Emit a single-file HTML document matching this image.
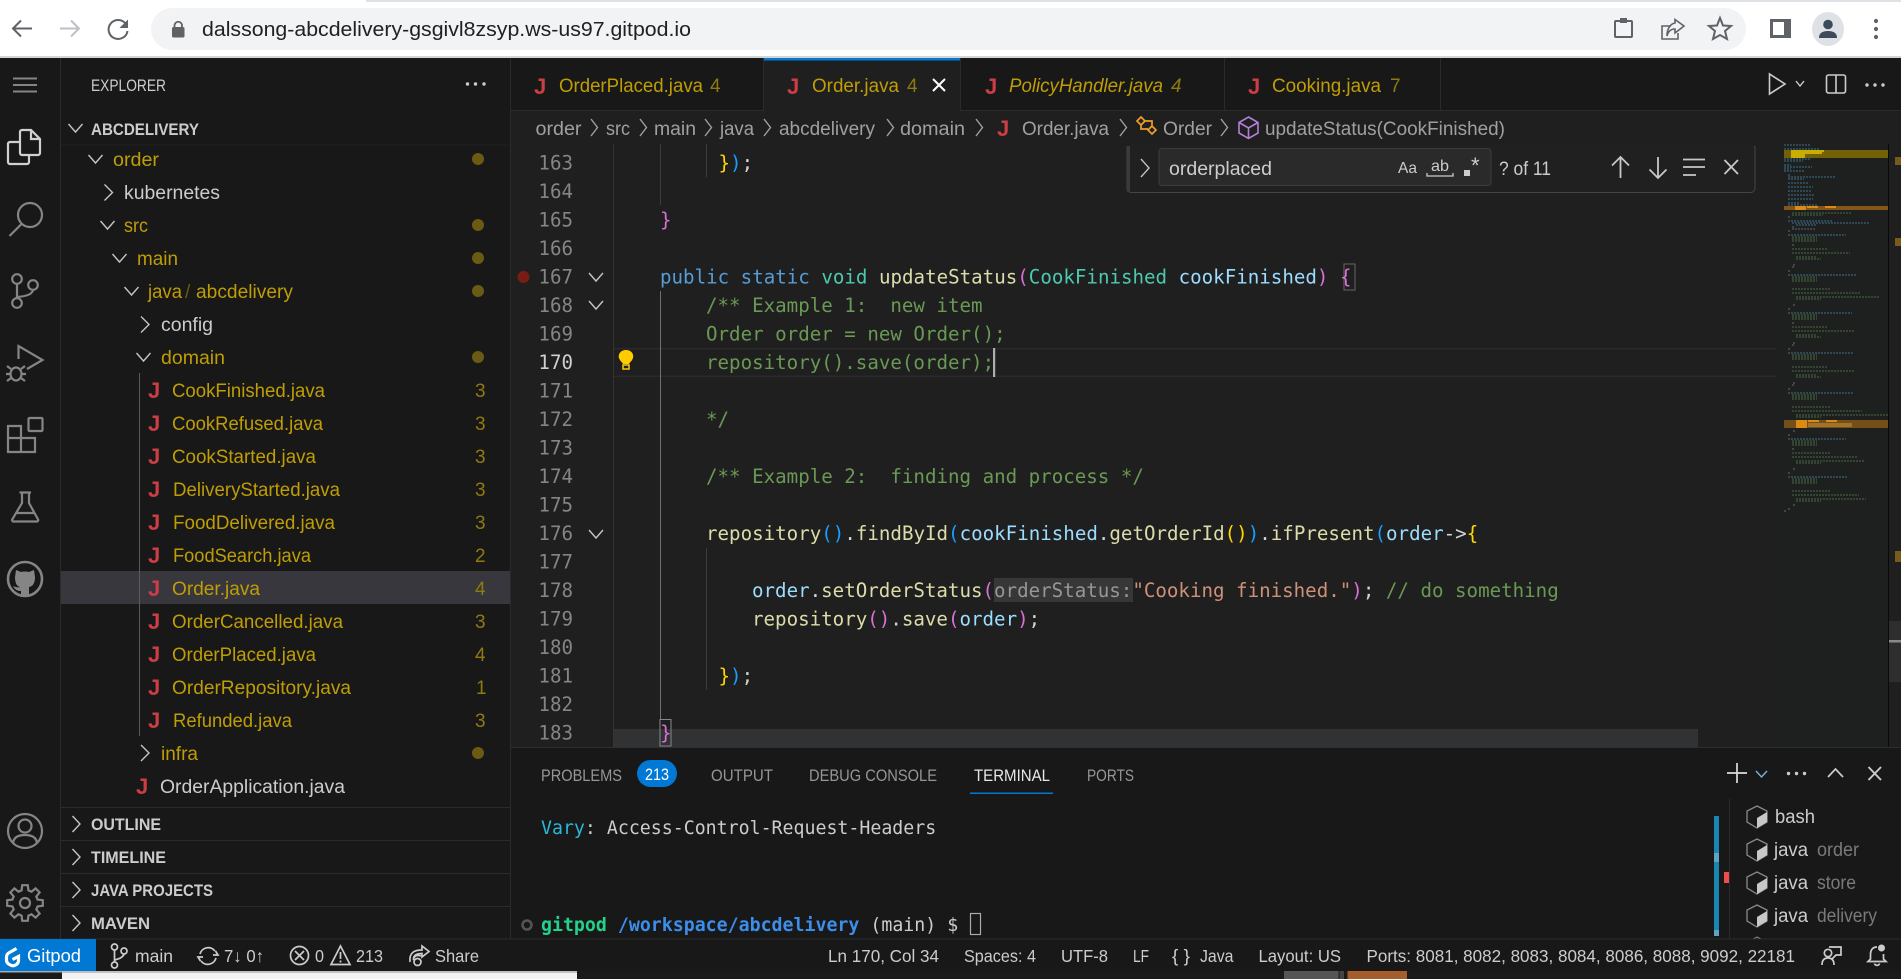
<!DOCTYPE html>
<html lang="en"><head><meta charset="utf-8"><title>Order.java - abcdelivery</title>
<style>
html,body{margin:0;padding:0;background:#181818;overflow:hidden;width:1901px;height:979px}
svg{display:block}
text{white-space:pre}
.s{font-family:"Liberation Sans",sans-serif;font-size:19px}
.m{font-family:"DejaVu Sans Mono","Liberation Mono",monospace;font-size:19.15px}
.t{font-family:"DejaVu Sans Mono","Liberation Mono",monospace;font-size:18.24px}
.y{fill:#bf9d05}.w{fill:#cccccc}.g{fill:#a0a0a0}
.c{font-family:"Liberation Sans",sans-serif;font-size:19px;fill:#8f7a10}
.j{font-family:"Liberation Sans",sans-serif;font-weight:bold;font-size:22px;fill:#cc3e44}
.h{font-family:"Liberation Sans",sans-serif;font-weight:bold;font-size:16.5px;fill:#cccccc}
.p{font-family:"Liberation Sans",sans-serif;font-size:16.5px;fill:#969696}
.st{font-family:"Liberation Sans",sans-serif;font-size:17.5px;fill:#cccccc}
.n{fill:#858585;text-anchor:end}
.cm{fill:#6a9955}.kw{fill:#569cd6}.ty{fill:#4ec9b0}.fn{fill:#dcdcaa}.v{fill:#9cdcfe}.pk{fill:#da70d6}.bl{fill:#179fff}.go{fill:#ffd700}.tx{fill:#d4d4d4}.str{fill:#ce9178}
.chev{fill:none;stroke:#c5c5c5;stroke-width:1.4}
.ai{fill:none;stroke:#858585;stroke-width:2.2}
.si{fill:none;stroke:#cccccc;stroke-width:1.7}
.bi{fill:none;stroke:#5f6368;stroke-width:2}
</style></head><body>
<svg xmlns="http://www.w3.org/2000/svg" width="1901" height="979" viewBox="0 0 1901 979">
<rect width="1901" height="979" fill="#181818"/>

<!-- browser chrome -->
<rect width="1901" height="56" fill="#ffffff"/>
<rect x="366" width="1535" height="2" fill="#dee1e6"/>
<rect y="56" width="1901" height="2" fill="#d5d5d5"/>
<path d="M32 28.5H13M21 20.5L13 28.5L21 36.5" class="bi"/>
<path d="M60 28.5H79M71 20.5L79 28.5L71 36.5" fill="none" stroke="#bdc1c6" stroke-width="2"/>
<path d="M125.5 23.5A9.5 9.5 0 1 0 127.5 31" class="bi"/><path d="M128 19.5V28H119.5Z" fill="#5f6368"/>
<rect x="151" y="8" width="1595" height="42" rx="21" fill="#f1f3f4"/>
<rect x="172" y="27" width="12.5" height="10.5" rx="1.5" fill="#5f6368"/>
<path d="M174.5 27V25.5a3.7 3.7 0 0 1 7.5 0V27" fill="none" stroke="#5f6368" stroke-width="1.8"/>
<text x="202" y="36" font-family="Liberation Sans,sans-serif" font-size="20" fill="#202124" textLength="489" lengthAdjust="spacingAndGlyphs">dalssong-abcdelivery-gsgivl8zsyp.ws-us97.gitpod.io</text>
<rect x="1615" y="21" width="17" height="16" rx="1" class="bi"/><rect x="1620" y="18" width="7" height="5" fill="#5f6368"/>
<path d="M1671 26H1662V39H1678V33" fill="none" stroke="#5f6368" stroke-width="1.6"/>
<path d="M1675 19.500L1684 26L1675 33V29C1670 29 1668 32 1667 36C1667 29 1670 24 1675 23Z" fill="none" stroke="#5f6368" stroke-width="1.6"/>
<path d="M1720 18L1723 25.500L1731 26L1725 31L1727 39L1720 35L1713 39L1715 31L1709 26L1717 25.500Z" class="bi"/>
<rect x="1770" y="19" width="21" height="19" fill="#5f6368"/><rect x="1773" y="22" width="11" height="13" fill="#fff"/>
<ellipse cx="1828" cy="29" rx="16" ry="17" fill="#dee1e6"/>
<circle cx="1828" cy="24.500" r="4.800" fill="#3c4a5a"/><path d="M1819 38Q1819 31 1828 31Q1837 31 1837 38Z" fill="#3c4a5a"/>
<circle cx="1876" cy="21" r="2.100" fill="#5f6368"/><circle cx="1876" cy="29" r="2.100" fill="#5f6368"/><circle cx="1876" cy="37" r="2.100" fill="#5f6368"/>

<!-- activity bar -->
<rect x="60" y="58" width="1" height="881" fill="#2b2b2b"/>
<path d="M13 78.500H37M13 85H37M13 91.500H37" fill="none" stroke="#858585" stroke-width="2"/>
<g fill="none" stroke="#d0d0d0" stroke-width="2.200">
<path d="M20 142H10a2 2 0 0 0-2 2V162a2 2 0 0 0 2 2H27a2 2 0 0 0 2-2V155"/>
<path d="M20 132a2 2 0 0 1 2-2H31L40 139V153a2 2 0 0 1-2 2H22a2 2 0 0 1-2-2Z"/><path d="M31 130V139H40"/>
</g>
<circle cx="30" cy="215" r="12" class="ai"/><path d="M21.500 224L9.500 236" class="ai"/>
<circle cx="17" cy="279" r="4.800" class="ai"/><circle cx="17" cy="303" r="4.800" class="ai"/><circle cx="33" cy="285" r="4.800" class="ai"/>
<path d="M17 284V298M33 290Q32 296 17 297" class="ai"/>
<path d="M18.500 359V346L42.500 360L27 369" class="ai"/>
<ellipse cx="16" cy="374" rx="5.500" ry="6.500" class="ai"/><path d="M7 366L11 369M25 366L21 369M6 374H10M26 374H22M7 381L11 378M25 381L21 378" class="ai"/>
<path d="M8 426H21V438H35V452H8ZM21 438V452M8 438H21" class="ai"/><rect x="28.500" y="418" width="14" height="13" rx="1" class="ai"/>
<path d="M19.500 492.500H31M22 492.500V503L12.500 519a1.500 1.500 0 0 0 1.300 2.500H36.500a1.500 1.500 0 0 0 1.300-2.500L29 503V492.500M16 513H34" class="ai"/>
<circle cx="25" cy="579" r="17" fill="none" stroke="#858585" stroke-width="2.600"/>
<path d="M16 570L21 572Q25 571 29 572L34 570L35 577Q35 586 29 587V595H21V591Q15 591 13 586Q17 588 20 587Q15 586 15 577Z" fill="#858585"/>
<circle cx="25" cy="831" r="17" class="ai"/><circle cx="25" cy="826" r="6.500" class="ai"/><path d="M13 843Q14 835 25 835Q36 835 37 843" class="ai"/>
<g transform="translate(25 903)"><polygon class="ai" points="-3.400,-12.600 -2.800,-17.800 2.800,-17.800 3.400,-12.600 6.500,-11.300 10.600,-14.600 14.600,-10.600 11.300,-6.500 12.600,-3.400 17.800,-2.800 17.800,2.800 12.600,3.400 11.300,6.500 14.600,10.600 10.600,14.600 6.500,11.300 3.400,12.600 2.800,17.800 -2.800,17.800 -3.400,12.600 -6.500,11.300 -10.600,14.600 -14.600,10.600 -11.300,6.500 -12.600,3.400 -17.800,2.800 -17.800,-2.800 -12.600,-3.400 -11.300,-6.500 -14.600,-10.600 -10.600,-14.600 -6.500,-11.300"/><circle r="5" class="ai"/></g>

<!-- sidebar -->
<rect x="510" y="58" width="1" height="881" fill="#2b2b2b"/>
<text x="91" y="91" class="p" style="fill:#cccccc" textLength="75" lengthAdjust="spacingAndGlyphs">EXPLORER</text>
<circle cx="467.500" cy="84" r="1.700" fill="#ccc"/><circle cx="475.500" cy="84" r="1.700" fill="#ccc"/><circle cx="484" cy="84" r="1.700" fill="#ccc"/>
<path d="M61 145H510" stroke="#1f211f" stroke-width="1"/>
<text x="91" y="135" class="h" textLength="108" lengthAdjust="spacingAndGlyphs">ABCDELIVERY</text>
<g class="chev">
<path d="M68.500 124L75.500 132L82.500 124M88.500 155L95.500 163L102.500 155M100.500 221L107.500 229L114.500 221M112.500 254L119.500 262L126.500 254M124.500 287L131.500 295L138.500 287M136.500 353L143.500 361L150.500 353"/>
<path d="M104.500 184.500L112.500 192.500L104.500 200.500M141 316.500L149 324.500L141 332.500M141 745L149 753L141 761M72.500 816L80 824L72.500 832M72.500 849L80 857L72.500 865M72.500 882L80 890L72.500 898M72.500 915L80 923L72.500 931"/>
</g>
<text x="113" y="166" class="s y" textLength="46" lengthAdjust="spacingAndGlyphs">order</text>
<text x="124" y="199" class="s w" textLength="96" lengthAdjust="spacingAndGlyphs">kubernetes</text>
<text x="124" y="232" class="s y" textLength="24" lengthAdjust="spacingAndGlyphs">src</text>
<text x="137" y="265" class="s y" textLength="41" lengthAdjust="spacingAndGlyphs">main</text>
<text x="148" y="298" class="s y" textLength="34" lengthAdjust="spacingAndGlyphs">java</text>
<text x="185" y="298" class="s" fill="#6a5a12">/</text>
<text x="196" y="298" class="s y" textLength="97" lengthAdjust="spacingAndGlyphs">abcdelivery</text>
<text x="161" y="331" class="s w" textLength="52" lengthAdjust="spacingAndGlyphs">config</text>
<text x="161" y="364" class="s y" textLength="64" lengthAdjust="spacingAndGlyphs">domain</text>
<g fill="#6b5a13"><circle cx="478" cy="159" r="6"/><circle cx="478" cy="225" r="6"/><circle cx="478" cy="258" r="6"/><circle cx="478" cy="291" r="6"/><circle cx="478" cy="357" r="6"/><circle cx="478" cy="753" r="6"/></g>
<rect x="61" y="571" width="449" height="33" fill="#37373d"/>
<rect x="139" y="373" width="1" height="363" fill="#5a5a5a"/>
<g class="j"><text x="148" y="398">J</text><text x="148" y="431">J</text><text x="148" y="464">J</text><text x="148" y="497">J</text><text x="148" y="530">J</text><text x="148" y="563">J</text><text x="148" y="596">J</text><text x="148" y="629">J</text><text x="148" y="662">J</text><text x="148" y="695">J</text><text x="148" y="728">J</text><text x="136" y="794">J</text></g>
<text x="172" y="397" class="s y" textLength="153" lengthAdjust="spacingAndGlyphs">CookFinished.java</text>
<text x="172" y="430" class="s y" textLength="151" lengthAdjust="spacingAndGlyphs">CookRefused.java</text>
<text x="172" y="463" class="s y" textLength="144" lengthAdjust="spacingAndGlyphs">CookStarted.java</text>
<text x="173" y="496" class="s y" textLength="167" lengthAdjust="spacingAndGlyphs">DeliveryStarted.java</text>
<text x="173" y="529" class="s y" textLength="162" lengthAdjust="spacingAndGlyphs">FoodDelivered.java</text>
<text x="173" y="562" class="s y" textLength="138" lengthAdjust="spacingAndGlyphs">FoodSearch.java</text>
<text x="172" y="595" class="s y" textLength="88" lengthAdjust="spacingAndGlyphs">Order.java</text>
<text x="172" y="628" class="s y" textLength="171" lengthAdjust="spacingAndGlyphs">OrderCancelled.java</text>
<text x="172" y="661" class="s y" textLength="144" lengthAdjust="spacingAndGlyphs">OrderPlaced.java</text>
<text x="172" y="694" class="s y" textLength="179" lengthAdjust="spacingAndGlyphs">OrderRepository.java</text>
<text x="173" y="727" class="s y" textLength="119" lengthAdjust="spacingAndGlyphs">Refunded.java</text>
<text x="161" y="760" class="s y" textLength="37" lengthAdjust="spacingAndGlyphs">infra</text>
<text x="160" y="793" class="s w" textLength="185" lengthAdjust="spacingAndGlyphs">OrderApplication.java</text>
<g class="c"><text x="475" y="397">3</text><text x="475" y="430">3</text><text x="475" y="463">3</text><text x="475" y="496">3</text><text x="475" y="529">3</text><text x="475" y="562">2</text><text x="475" y="595">4</text><text x="475" y="628">3</text><text x="475" y="661">4</text><text x="476" y="694">1</text><text x="475" y="727">3</text></g>
<path d="M61 807.500H510M61 840.500H510M61 873.500H510M61 906.500H510" stroke="#2b2b2b"/>
<text x="91" y="830" class="h" textLength="70" lengthAdjust="spacingAndGlyphs">OUTLINE</text>
<text x="91" y="863" class="h" textLength="75" lengthAdjust="spacingAndGlyphs">TIMELINE</text>
<text x="91" y="896" class="h" textLength="122" lengthAdjust="spacingAndGlyphs">JAVA PROJECTS</text>
<text x="91" y="929" class="h" textLength="59" lengthAdjust="spacingAndGlyphs">MAVEN</text>

<!-- editor -->
<rect x="511" y="144" width="1390" height="603" fill="#1f1f1f"/>
<rect x="511" y="58" width="1390" height="52" fill="#181818"/>
<rect x="511" y="110" width="1390" height="1" fill="#2b2b2b"/>
<rect x="511" y="111" width="1390" height="33" fill="#1f1f1f"/>
<rect x="764" y="58" width="196" height="53" fill="#1f1f1f"/>
<rect x="764" y="58" width="196" height="2.500" fill="#0078d4"/>
<path d="M763.500 58V110M960.500 58V110M1224.500 58V110M1440.500 58V110" stroke="#2b2b2b"/>
<text x="534" y="94" class="j">J</text><text x="559" y="92" class="s y" textLength="144" lengthAdjust="spacingAndGlyphs">OrderPlaced.java</text><text x="710" y="92" class="c">4</text>
<text x="787" y="94" class="j">J</text><text x="812" y="92" class="s y" textLength="87" lengthAdjust="spacingAndGlyphs">Order.java</text><text x="907" y="92" class="c">4</text>
<path d="M933 79L945 91M945 79L933 91" stroke="#fff" stroke-width="2" fill="none"/>
<text x="985" y="94" class="j">J</text><text x="1009" y="92" class="s y" font-style="italic" textLength="154" lengthAdjust="spacingAndGlyphs">PolicyHandler.java</text><text x="1171" y="92" class="c" font-style="italic">4</text>
<text x="1248" y="94" class="j">J</text><text x="1272" y="92" class="s y" textLength="109" lengthAdjust="spacingAndGlyphs">Cooking.java</text><text x="1390" y="92" class="c">7</text>
<path d="M1769.500 74V94L1785 84Z" fill="none" stroke="#ccc" stroke-width="1.600"/>
<path d="M1796 81L1800 86L1804 81" fill="none" stroke="#ccc" stroke-width="1.400"/>
<rect x="1826.500" y="75" width="19" height="18" rx="2" fill="none" stroke="#ccc" stroke-width="1.600"/><path d="M1836 75V93" stroke="#ccc" stroke-width="1.600"/>
<circle cx="1867" cy="85" r="1.700" fill="#ccc"/><circle cx="1875" cy="85" r="1.700" fill="#ccc"/><circle cx="1883" cy="85" r="1.700" fill="#ccc"/>

<!-- breadcrumbs -->
<g class="s g">
<text x="535.500" y="135" textLength="46" lengthAdjust="spacingAndGlyphs">order</text>
<text x="606" y="135" textLength="24" lengthAdjust="spacingAndGlyphs">src</text>
<text x="654" y="135" textLength="42" lengthAdjust="spacingAndGlyphs">main</text>
<text x="720" y="135" textLength="34" lengthAdjust="spacingAndGlyphs">java</text>
<text x="779" y="135" textLength="96" lengthAdjust="spacingAndGlyphs">abcdelivery</text>
<text x="900" y="135" textLength="65" lengthAdjust="spacingAndGlyphs">domain</text>
<text x="1022" y="135" textLength="87" lengthAdjust="spacingAndGlyphs">Order.java</text>
<text x="1163" y="135" textLength="49" lengthAdjust="spacingAndGlyphs">Order</text>
<text x="1265" y="135" textLength="240" lengthAdjust="spacingAndGlyphs">updateStatus(CookFinished)</text>
</g>
<text x="997" y="136" class="j">J</text>
<path d="M591 119L597.500 127.500L591 136M640 119L646.500 127.500L640 136M705 119L711.500 127.500L705 136M764 119L770.500 127.500L764 136M887 119L893.500 127.500L887 136M976 119L982.500 127.500L976 136M1120 119L1126.500 127.500L1120 136M1221 119L1227.500 127.500L1221 136" fill="none" stroke="#a0a0a0" stroke-width="1.400"/>
<path d="M1137 121L1141 117L1145 121L1141 125ZM1148 130L1152 126L1156 130L1152 134ZM1141 125V129H1148M1145 121H1152V126" fill="none" stroke="#ee9d28" stroke-width="1.700"/>
<path d="M1248.500 117L1258 122.500V133L1248.500 138.500L1239 133V122.500ZM1239 122.500L1248.500 128L1258 122.500M1248.500 128V138.500" fill="none" stroke="#b180d7" stroke-width="1.600"/>

<!-- editor highlights and guides -->
<rect x="614" y="348" width="1162" height="1.500" fill="#2a2a2a"/><rect x="614" y="375.500" width="1162" height="1.500" fill="#2a2a2a"/>
<rect x="613" y="144" width="1" height="603" fill="#333"/>
<path d="M660.500 144V205M706.500 144V177M706.500 548V690" stroke="#3d3d3d" fill="none"/>
<path d="M660.500 291V719" stroke="#707070" fill="none"/>
<rect x="614" y="729" width="1084" height="18" fill="#303234"/>
<rect x="660" y="719.500" width="11" height="26.500" fill="none" stroke="#888" stroke-width="1"/>
<rect x="1344" y="264" width="11" height="26" fill="none" stroke="#666" stroke-width="1"/>

<!-- line numbers -->
<g class="m n">
<text x="573" y="169.500">163</text><text x="573" y="198">164</text><text x="573" y="226.500">165</text><text x="573" y="255">166</text><text x="573" y="283.500">167</text><text x="573" y="312">168</text><text x="573" y="340.500">169</text>
<text x="573" y="369" style="fill:#cfcfcf">170</text>
<text x="573" y="397.500">171</text><text x="573" y="426">172</text><text x="573" y="454.500">173</text><text x="573" y="483">174</text><text x="573" y="511.500">175</text><text x="573" y="540">176</text><text x="573" y="568.500">177</text><text x="573" y="597">178</text><text x="573" y="625.500">179</text><text x="573" y="654">180</text><text x="573" y="682.500">181</text><text x="573" y="711">182</text><text x="573" y="739.500">183</text>
</g>
<circle cx="523.500" cy="277" r="6" fill="#7a1c16"/>
<path d="M589 273L596 281L603 273M589 301L596 309L603 301M589 530L596 538L603 530" class="chev"/>
<path d="M626 350C620 350 618 355 619 358C620 361 622 362 623 364H629C630 362 632 361 633 358C634 355 632 350 626 350Z" fill="#ffcc00"/><rect x="623" y="365" width="6" height="4" fill="none" stroke="#ffcc00" stroke-width="1.500"/>

<!-- code -->
<g class="m">
<text x="718.500" y="169.500"><tspan class="go">}</tspan><tspan class="bl">)</tspan><tspan class="tx">;</tspan></text>
<text x="660" y="226.500" class="pk">}</text>
<text x="660" y="283.500"><tspan class="kw">public static </tspan><tspan class="ty">void </tspan><tspan class="fn">updateStatus</tspan><tspan class="pk">(</tspan><tspan class="ty">CookFinished </tspan><tspan class="v">cookFinished</tspan><tspan class="pk">)</tspan><tspan class="tx"> </tspan><tspan class="pk">{</tspan></text>
<text x="706" y="312" class="cm">/** Example 1:  new item</text>
<text x="706" y="340.500" class="cm">Order order = new Order();</text>
<text x="706" y="369" class="cm">repository().save(order);</text>
<text x="706" y="426" class="cm">*/</text>
<text x="706" y="483" class="cm">/** Example 2:  finding and process */</text>
<text x="706" y="540"><tspan class="fn">repository</tspan><tspan class="bl">()</tspan><tspan class="tx">.</tspan><tspan class="fn">findById</tspan><tspan class="bl">(</tspan><tspan class="v">cookFinished</tspan><tspan class="tx">.</tspan><tspan class="fn">getOrderId</tspan><tspan class="go">()</tspan><tspan class="bl">)</tspan><tspan class="tx">.</tspan><tspan class="fn">ifPresent</tspan><tspan class="bl">(</tspan><tspan class="v">order</tspan><tspan class="tx">-&gt;</tspan><tspan class="go">{</tspan></text>
<rect x="994" y="578" width="139" height="24" fill="#373737"/>
<text x="752" y="597"><tspan class="v">order</tspan><tspan class="tx">.</tspan><tspan class="fn">setOrderStatus</tspan><tspan class="pk">(</tspan><tspan style="fill:#969696">orderStatus:</tspan><tspan class="str">"Cooking finished."</tspan><tspan class="pk">)</tspan><tspan class="tx">; </tspan><tspan class="cm">// do something</tspan></text>
<text x="752" y="625.500"><tspan class="fn">repository</tspan><tspan class="pk">()</tspan><tspan class="tx">.</tspan><tspan class="fn">save</tspan><tspan class="pk">(</tspan><tspan class="v">order</tspan><tspan class="pk">)</tspan><tspan class="tx">;</tspan></text>
<text x="718.500" y="682.500"><tspan class="go">}</tspan><tspan class="bl">)</tspan><tspan class="tx">;</tspan></text>
<text x="660" y="739.500" class="pk">}</text>
</g>
<rect x="993" y="348" width="2.200" height="29" fill="#aeafad"/>

<!-- minimap -->
<rect x="1776" y="144" width="112" height="603" fill="#1e2020"/>
<rect x="1784" y="150" width="104" height="8" fill="#736109"/>
<path d="M1791 150H1824V152H1822V154H1805V158H1791Z" fill="#c9ad00"/>
<rect x="1784" y="206" width="104" height="4" fill="#85561a"/><rect x="1795" y="206" width="11" height="4" fill="#dd8a14"/><rect x="1807" y="206" width="11" height="2" fill="#dd8a14"/><rect x="1825" y="206" width="11" height="2" fill="#dd8a14"/>
<rect x="1784" y="420" width="104" height="8" fill="#73501a"/><rect x="1796" y="420" width="11" height="8" fill="#dd8a14"/><rect x="1808" y="420" width="11" height="2" fill="#dd8a14"/><rect x="1826" y="420" width="11" height="2" fill="#dd8a14"/><rect x="1808" y="423" width="44" height="4" fill="#a0722a"/>
<g opacity="0.7" stroke-dasharray="2 1">
<path fill="none" stroke="#3d6c86" stroke-width="1.500" d="M1784 145H1811M1784 149H1820M1784 159H1810M1784 161H1803M1784 165H1791M1784 167H1812M1784 169H1791M1784 171H1804M1788 175H1791M1788 177H1835M1788 179H1804M1788 183H1808M1788 187H1813M1788 191H1812M1788 195H1815M1788 199H1813M1788 203H1800M1788 205H1817M1788 221H1832M1792 223H1870M1796 225H1817M1788 235H1846M1788 275H1856M1788 313H1852M1788 353H1854M1788 393H1854M1788 439H1846M1788 477H1848"/>
<path fill="none" stroke="#47653f" stroke-width="1.500" d="M1792 213H1852M1792 215H1823M1792 237H1817M1792 239H1817M1792 241H1817M1792 249H1827M1792 253H1850M1796 257H1817M1796 259H1821M1792 277H1817M1792 279H1817M1792 281H1817M1792 289H1830M1792 293H1860M1796 297H1879M1796 299H1821M1792 315H1817M1792 317H1817M1792 319H1817M1792 327H1827M1792 331H1854M1796 335H1817M1796 337H1821M1792 355H1817M1792 357H1817M1792 359H1817M1792 367H1827M1792 371H1855M1796 375H1817M1796 377H1821M1792 395H1817M1792 397H1817M1792 399H1817M1792 407H1830M1792 411H1862M1796 415H1888M1796 417H1821M1792 441H1817M1792 443H1817M1792 445H1817M1792 453H1830M1792 457H1858M1796 461H1865M1796 463H1821M1792 479H1817M1792 481H1817M1792 483H1817M1792 491H1830M1792 495H1859M1796 499H1866M1796 501H1821"/>
<path fill="none" stroke="#6a5a6a" stroke-width="1.500" d="M1792 229H1815"/>
<path fill="none" stroke="#666" stroke-width="1.500" d="M1788 217H1790M1792 227H1794M1788 231H1790M1792 245H1794M1793 265H1796M1792 267H1794M1788 271H1790M1793 305H1796M1788 309H1790M1792 323H1794M1793 343H1796M1792 345H1794M1788 349H1790M1793 383H1796M1792 385H1794M1788 389H1790M1793 431H1796M1788 435H1790M1792 449H1794M1793 469H1796M1788 473H1790M1793 505H1796M1788 509H1790M1784 511H1786"/>
</g>
<rect x="1888" y="144" width="13" height="603" fill="#1f1f1f"/>
<rect x="1888" y="621" width="13" height="61" fill="#2e2e2e"/><rect x="1889" y="640" width="12" height="2.500" fill="#8a8a8a"/>
<rect x="1888" y="144" width="1" height="603" fill="#0a0a0a"/>
<rect x="1895" y="157" width="6" height="8" fill="#7a5a1c"/><rect x="1895" y="238" width="6" height="8" fill="#7a5a1c"/><rect x="1895" y="551" width="6" height="11" fill="#7a5a1c"/>

<!-- find widget -->
<rect x="1127" y="144" width="628" height="48.500" rx="4" fill="#202020" stroke="#454545"/>
<rect x="1127" y="144" width="3" height="48" fill="#3a3a3a"/>
<rect x="1127" y="143" width="628" height="3" fill="#1f1f1f"/>
<rect x="1159" y="148.500" width="332" height="37" rx="3" fill="#2a2a2a" stroke="#3c3c3c"/>
<path d="M1141 159L1149 168L1141 177" class="chev"/>
<text x="1169" y="175" class="s w" textLength="103" lengthAdjust="spacingAndGlyphs">orderplaced</text>
<text x="1398" y="173" class="s w" style="font-size:16px" textLength="19" lengthAdjust="spacingAndGlyphs">Aa</text>
<text x="1431" y="171" class="s w" style="font-size:16px" textLength="18" lengthAdjust="spacingAndGlyphs">ab</text>
<path d="M1427 173V176H1453V173" fill="none" stroke="#ccc" stroke-width="1.300"/>
<rect x="1464" y="170" width="6" height="6" fill="#ccc"/>
<text x="1471" y="173" class="s w" style="font-size:22px">*</text>
<text x="1499" y="175" class="s w" textLength="52" lengthAdjust="spacingAndGlyphs">? of 11</text>
<path d="M1620.500 157V178M1612 165.500L1620.500 157L1629 165.500M1658 157V178M1649.500 169.500L1658 178L1666.500 169.500M1683 159.500H1705M1683 167H1705M1683 175H1696M1724.500 160L1738 174M1738 160L1724.500 174" fill="none" stroke="#c8c8c8" stroke-width="1.800"/>

<!-- panel -->
<rect x="511" y="747" width="1390" height="192" fill="#181818"/>
<rect x="511" y="747" width="1390" height="1" fill="#2f2f2f"/>
<text x="541" y="781" class="p" textLength="81" lengthAdjust="spacingAndGlyphs">PROBLEMS</text>
<rect x="637" y="760" width="40" height="27" rx="13.500" fill="#0078d4"/>
<text x="645" y="780" class="p" style="fill:#fff" textLength="24" lengthAdjust="spacingAndGlyphs">213</text>
<text x="711" y="781" class="p" textLength="62" lengthAdjust="spacingAndGlyphs">OUTPUT</text>
<text x="809" y="781" class="p" textLength="128" lengthAdjust="spacingAndGlyphs">DEBUG CONSOLE</text>
<text x="974" y="781" class="p" style="fill:#e7e7e7" textLength="76" lengthAdjust="spacingAndGlyphs">TERMINAL</text>
<rect x="970" y="792.500" width="83" height="1.500" fill="#0078d4"/>
<text x="1087" y="781" class="p" textLength="47" lengthAdjust="spacingAndGlyphs">PORTS</text>
<g class="t">
<text x="541" y="834"><tspan fill="#29b8db">Vary</tspan><tspan fill="#cccccc">: Access-Control-Request-Headers</tspan></text>
<text x="541" y="931"><tspan fill="#23d18b" font-weight="bold">gitpod</tspan><tspan fill="#ccc"> </tspan><tspan fill="#3b8eea" font-weight="bold">/workspace/abcdelivery</tspan><tspan fill="#cccccc"> (main) $ </tspan></text>
</g>
<circle cx="527" cy="925" r="4.500" fill="none" stroke="#555" stroke-width="2.500"/>
<rect x="970.500" y="913.500" width="10" height="21" fill="none" stroke="#aaa" stroke-width="1.200"/>
<path d="M1727 773H1747M1737 763V783" stroke="#ddd" stroke-width="1.700"/>
<path d="M1756 771L1761.500 777L1767 771" fill="none" stroke="#7ab4d8" stroke-width="1.400"/>
<circle cx="1788.500" cy="773.500" r="1.700" fill="#ccc"/><circle cx="1796.500" cy="773.500" r="1.700" fill="#ccc"/><circle cx="1804.500" cy="773.500" r="1.700" fill="#ccc"/>
<path d="M1828 777L1835.500 769L1843 777" class="si"/>
<path d="M1868.500 767L1881 780M1881 767L1868.500 780" fill="none" stroke="#ccc" stroke-width="1.900"/>
<rect x="1729" y="799" width="1" height="140" fill="#2b2b2b"/>
<rect x="1714" y="816" width="5" height="120" fill="#1a85b0"/><rect x="1714" y="853" width="5" height="9" fill="#5da3c2"/><rect x="1714" y="930" width="5" height="6" fill="#5da3c2"/>
<rect x="1724" y="872" width="5" height="11" fill="#f14c4c"/>
<g transform="translate(0 817)"><path d="M1757 -11L1767 -6V5L1757 11L1747 5V-6Z" fill="none" stroke="#8a8a8a" stroke-width="1.300"/><path d="M1767 -5V5L1757 11V1Z" fill="#c8c8c8"/></g>
<g transform="translate(0 850)"><path d="M1757 -11L1767 -6V5L1757 11L1747 5V-6Z" fill="none" stroke="#8a8a8a" stroke-width="1.300"/><path d="M1767 -5V5L1757 11V1Z" fill="#c8c8c8"/></g>
<g transform="translate(0 883)"><path d="M1757 -11L1767 -6V5L1757 11L1747 5V-6Z" fill="none" stroke="#8a8a8a" stroke-width="1.300"/><path d="M1767 -5V5L1757 11V1Z" fill="#c8c8c8"/></g>
<g transform="translate(0 916)"><path d="M1757 -11L1767 -6V5L1757 11L1747 5V-6Z" fill="none" stroke="#8a8a8a" stroke-width="1.300"/><path d="M1767 -5V5L1757 11V1Z" fill="#c8c8c8"/></g>
<path d="M1757 937L1762 939.500H1752Z" fill="none" stroke="#8a8a8a"/>
<text x="1775" y="823" class="s w" textLength="40" lengthAdjust="spacingAndGlyphs">bash</text>
<text x="1774" y="856" class="s w" textLength="34" lengthAdjust="spacingAndGlyphs">java</text><text x="1817" y="856" class="s" fill="#7a7a7a" textLength="42" lengthAdjust="spacingAndGlyphs">order</text>
<text x="1774" y="889" class="s w" textLength="34" lengthAdjust="spacingAndGlyphs">java</text><text x="1817" y="889" class="s" fill="#7a7a7a" textLength="39" lengthAdjust="spacingAndGlyphs">store</text>
<text x="1774" y="922" class="s w" textLength="34" lengthAdjust="spacingAndGlyphs">java</text><text x="1817" y="922" class="s" fill="#7a7a7a" textLength="60" lengthAdjust="spacingAndGlyphs">delivery</text>

<!-- status bar -->
<rect x="0" y="939" width="1901" height="32" fill="#181818"/>
<rect x="0" y="938.500" width="1901" height="1" fill="#2b2b2b"/>
<rect x="0" y="939" width="96" height="32" fill="#0078d4"/>
<path d="M16.500 948.500L9.500 952.500Q6.500 954 6.500 957V960Q6.500 963 9.500 964.500L11.500 965.500Q13 966 14.500 965.500L16.500 964.500Q18.500 963 18.500 960.500V956.500L12.500 959.500" fill="none" stroke="#fff" stroke-width="3.200"/>
<text x="27" y="962" class="st" style="fill:#fff;font-size:18px" textLength="54" lengthAdjust="spacingAndGlyphs">Gitpod</text>
<circle cx="114.500" cy="947" r="3" class="si"/><circle cx="114.500" cy="965" r="3" class="si"/><circle cx="124" cy="951" r="3" class="si"/><path d="M114.500 950V962M124 954Q123 958 114.500 960" class="si"/>
<text x="135" y="962" class="st" textLength="38" lengthAdjust="spacingAndGlyphs">main</text>
<path d="M200 954A8.500 8.500 0 0 1 215 951M216 958A8.500 8.500 0 0 1 201 961M213 955L218 955L215.500 951M203 957L198 957L200.500 961" class="si"/>
<text x="224" y="962" class="st" textLength="40" lengthAdjust="spacingAndGlyphs">7↓ 0↑</text>
<circle cx="299.500" cy="955.500" r="9" class="si"/><path d="M295 951L304 960M304 951L295 960" class="si"/>
<text x="315" y="962" class="st" textLength="9" lengthAdjust="spacingAndGlyphs">0</text>
<path d="M340.500 946L350 964.500H331Z" class="si"/><path d="M340.500 952V959M340.500 960.500V962.500" class="si"/>
<text x="356" y="962" class="st" textLength="27" lengthAdjust="spacingAndGlyphs">213</text>
<circle cx="417.500" cy="962" r="3.500" class="si"/><path d="M410 962C409 952 415 950 422 950V946L429 951.500L422 957V953.500C417 953.500 413 955 413.500 960M414 958C415 955 418 955 421 956" class="si"/>
<text x="435" y="962" class="st" textLength="44" lengthAdjust="spacingAndGlyphs">Share</text>
<text x="828" y="962" class="st" textLength="111" lengthAdjust="spacingAndGlyphs">Ln 170, Col 34</text>
<text x="964" y="962" class="st" textLength="72" lengthAdjust="spacingAndGlyphs">Spaces: 4</text>
<text x="1061" y="962" class="st" textLength="47" lengthAdjust="spacingAndGlyphs">UTF-8</text>
<text x="1133" y="962" class="st" textLength="16" lengthAdjust="spacingAndGlyphs">LF</text>
<text x="1172" y="962" class="st" textLength="18" lengthAdjust="spacingAndGlyphs">{ }</text>
<text x="1200" y="962" class="st" textLength="33.500" lengthAdjust="spacingAndGlyphs">Java</text>
<text x="1258.500" y="962" class="st" textLength="82.500" lengthAdjust="spacingAndGlyphs">Layout: US</text>
<text x="1366.500" y="962" class="st" textLength="428.500" lengthAdjust="spacingAndGlyphs">Ports: 8081, 8082, 8083, 8084, 8086, 8088, 9092, 22181</text>
<path d="M1829 947H1841V955H1836L1832 959" class="si"/><circle cx="1828" cy="953" r="3.700" class="si"/><path d="M1822 965Q1822 958 1828 958Q1834 958 1834 965" class="si"/>
<path d="M1877 947C1872 947 1870.500 951 1870.500 954V959L1868 961.500H1886L1883.500 959V954M1874.500 963.500C1875 966 1879 966 1879.500 963.500" class="si"/><circle cx="1881.500" cy="948" r="3.500" fill="#ccc"/>

<!-- bottom strip -->
<rect x="0" y="971" width="1901" height="8" fill="#1a1a1a"/>
<rect x="0" y="971" width="62" height="1.500" fill="#aaa"/>
<rect x="62" y="971" width="515" height="2" fill="#c0c0c0"/>
<rect x="62" y="973" width="515" height="6" fill="#f2f2f2"/>
<rect x="1284" y="971" width="54.500" height="8" fill="#555"/><rect x="1339.500" y="971" width="4.500" height="8" fill="#444"/>
<rect x="1347.500" y="971" width="59.500" height="8" fill="#a55d2a"/>
</svg>
</body></html>
